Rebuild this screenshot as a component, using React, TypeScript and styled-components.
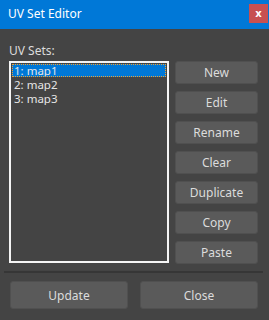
import React from "react";
import styled, { createGlobalStyle } from "styled-components";

const GlobalStyle = createGlobalStyle`
  html, body {
    margin: 0;
    padding: 0;
    background: #444444;
  }
  body {
    font-family: "Noto Sans", "Open Sans", sans-serif;
    font-size: 12px;
  }
`;

const Window = styled.div`
  width: 269px;
  height: 320px;
  background: #444444;
  display: flex;
  flex-direction: column;
  overflow: hidden;
`;

const TitleBar = styled.div`
  height: 29px;
  background: #0078d7;
  display: flex;
  align-items: center;
  justify-content: space-between;
  padding: 0 1px 0 8px;
`;

const Title = styled.span`
  color: #ffffff;
  font-size: 12px;
  line-height: 1;
  margin-top: -1px;
`;

const CloseBox = styled.div`
  width: 19px;
  height: 19px;
  background: #c75050;
  color: #ffffff;
  font-family: "DejaVu Sans", sans-serif;
  font-weight: bold;
  font-size: 10px;
  display: flex;
  align-items: center;
  justify-content: center;
  margin-top: -3px;
`;

const Body = styled.div`
  padding: 15px 11px 0 9px;
  display: flex;
  flex-direction: column;
`;

const Label = styled.div`
  color: #dcdcdc;
  height: 17px;
  line-height: 14px;
`;

const MainRow = styled.div`
  display: flex;
  gap: 6px;
`;

const ListBox = styled.div`
  width: 156px;
  height: 196px;
  border: 2px solid #f4f4f4;
  padding: 1px;
  background: #444444;
  display: flex;
  flex-direction: column;
`;

const ListItem = styled.div<{ selected?: boolean }>`
  height: 13px;
  line-height: 13px;
  font-size: 11.5px;
  padding-left: 2px;
  color: #e6e6e6;
  overflow: hidden;
  background: ${({ selected }) => (selected ? "#0078d7" : "transparent")};
  outline: ${({ selected }) => (selected ? "1px dotted #f0a030" : "none")};
  outline-offset: -1px;
  margin-bottom: 1px;
`;

const ButtonColumn = styled.div`
  display: flex;
  flex-direction: column;
  gap: 7px;
`;

const Button = styled.div<{ wide?: boolean }>`
  width: ${({ wide }) => (wide ? "118px" : "83px")};
  height: ${({ wide }) => (wide ? "28px" : "23px")};
  box-sizing: border-box;
  background: #5a5a5a;
  border: 1px solid #505050;
  border-radius: 3px;
  color: #dcdcdc;
  display: flex;
  align-items: center;
  justify-content: center;
`;

const Separator = styled.div`
  height: 2px;
  background: #363636;
  margin: 7px 6px 0 4px;
`;

const Footer = styled.div`
  display: flex;
  gap: 12px;
  padding: 8px 0 0 10px;
`;

const sets = ["1: map1", "2: map2", "3: map3"];
const actions = ["New", "Edit", "Rename", "Clear", "Duplicate", "Copy", "Paste"];

export default function App() {
  return (
    <Window>
      <GlobalStyle />
      <TitleBar>
        <Title>UV Set Editor</Title>
        <CloseBox>x</CloseBox>
      </TitleBar>
      <Body>
        <Label>UV Sets:</Label>
        <MainRow>
          <ListBox>
            {sets.map((s, i) => (
              <ListItem key={s} selected={i === 0}>
                {s}
              </ListItem>
            ))}
          </ListBox>
          <ButtonColumn>
            {actions.map((a) => (
              <Button key={a}>{a}</Button>
            ))}
          </ButtonColumn>
        </MainRow>
      </Body>
      <Separator />
      <Footer>
        <Button wide>Update</Button>
        <Button wide>Close</Button>
      </Footer>
    </Window>
  );
}
